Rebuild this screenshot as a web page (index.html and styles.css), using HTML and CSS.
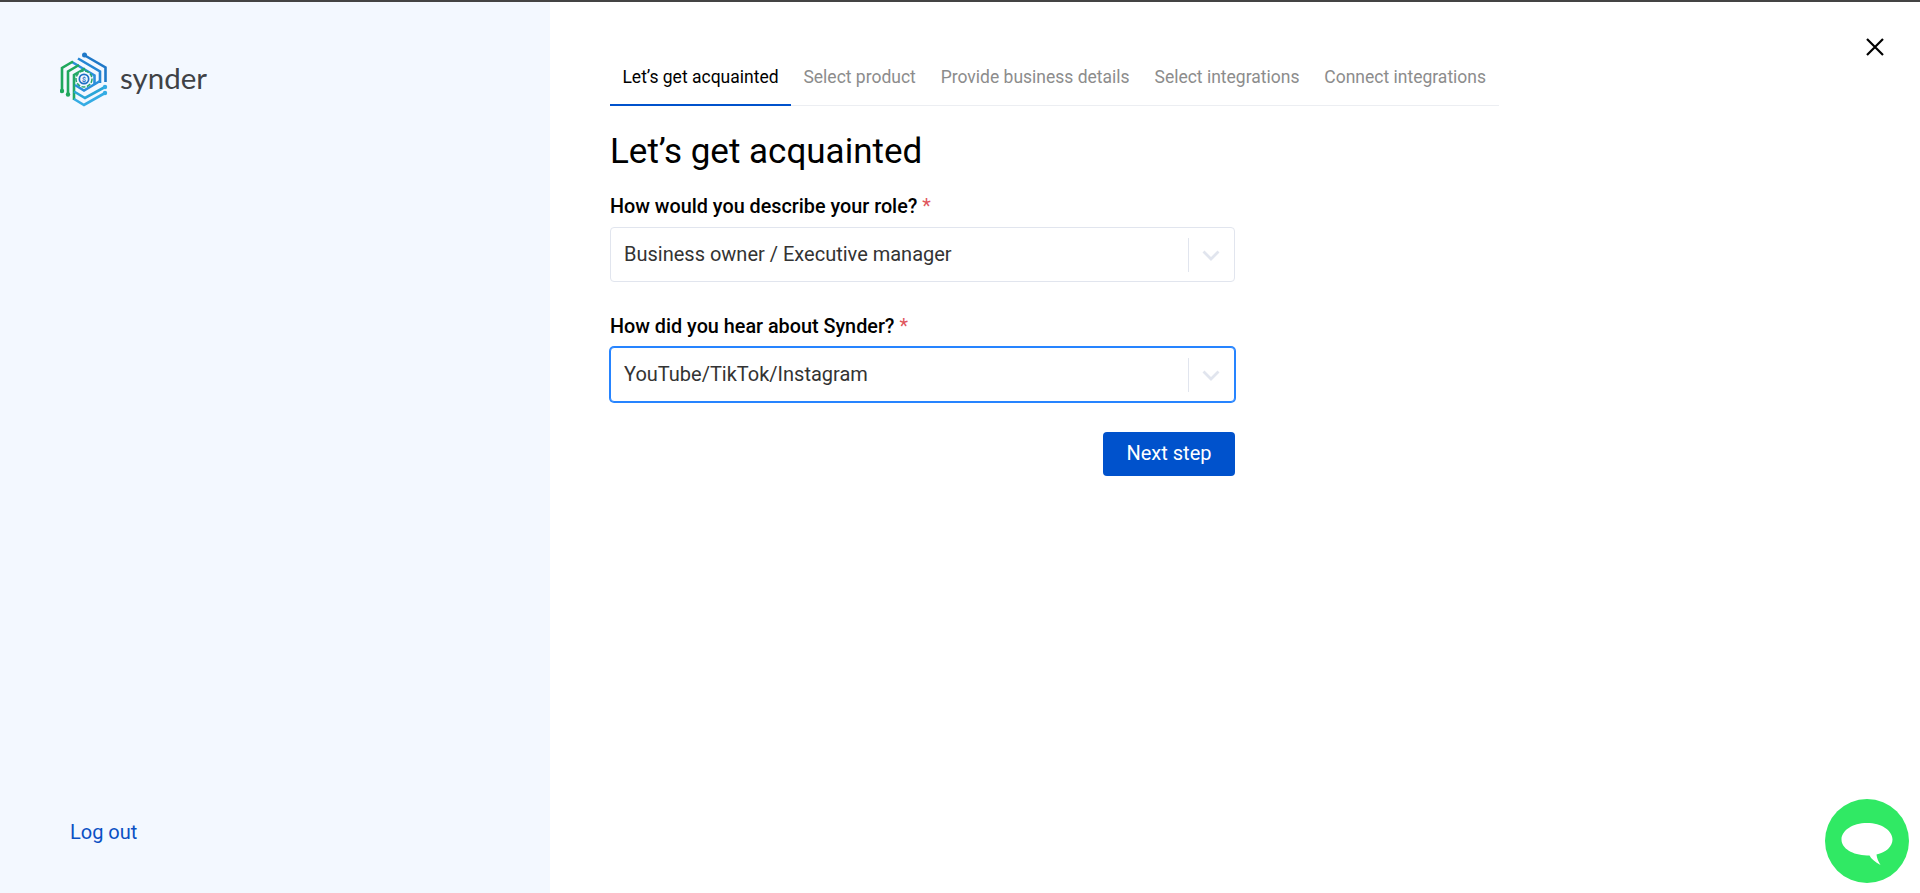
FILE: index.html
```html
<!DOCTYPE html>
<html lang="en">
<head>
<meta charset="utf-8">
<title>Synder</title>
<link rel="stylesheet" href="styles.css">
</head>
<body>
<div class="app">
  <aside class="sidebar">
    <div class="brand">
      <svg class="logo" viewBox="60 52 48 56" width="48" height="56" fill="none" stroke-width="2.600">
        <path d="M84 55L105.500 67.500V82" stroke="#1f78c8"/>
        <path d="M78 58.500L100 71.500V83" stroke="#2485d4"/>
        <path d="M72 62L94.500 75.500V85" stroke="#2b8fdc"/>
        <path d="M73 61.500L62 68V91" stroke="#1fa85c"/>
        <path d="M79 65L68 71.500V94" stroke="#1fa85c"/>
        <path d="M85 68.500L74 75V100" stroke="#22a866"/>
        <path d="M100 81L84 90.500L75 85" stroke="#2b8fdc"/>
        <path d="M105 87L85 98L74 91.500" stroke="#2aa6d8"/>
        <path d="M105 93L84 105L74 99" stroke="#34ace4"/>
        <circle cx="84" cy="79" r="8" fill="#f3f8ff" stroke="#25a56b" stroke-width="1.500" stroke-dasharray="4 1.500"/>
        <circle cx="84" cy="79" r="5.500" fill="#1f6fc4" stroke="none"/>
        <circle cx="84" cy="79" r="3.800" fill="#f3f8ff" stroke="none"/>
        <text class="logo-coin" x="84" y="81.500" text-anchor="middle">$</text>
        <g stroke="none">
          <circle cx="84.500" cy="55" r="2.500" fill="#1f78c8"/>
          <circle cx="62" cy="91" r="2.200" fill="#1fa85c"/>
          <circle cx="68" cy="94.500" r="2.200" fill="#1fa85c"/>
          <circle cx="105" cy="87" r="2.200" fill="#34ace4"/>
          <circle cx="105" cy="93" r="2.200" fill="#34ace4"/>
        </g>
      </svg>
      <span class="brand-name">synder</span>
    </div>
    <a class="logout" href="#">Log out</a>
  </aside>
  <main class="main">
    <nav class="tabs">
      <a class="tab tab-active" href="#">Let’s get acquainted</a>
      <a class="tab" href="#">Select product</a>
      <a class="tab" href="#">Provide business details</a>
      <a class="tab" href="#">Select integrations</a>
      <a class="tab" href="#">Connect integrations</a>
    </nav>
    <h1 class="title">Let’s get acquainted</h1>
    <form class="form">
      <div class="field">
        <div class="label">How would you describe your role? <span class="req">*</span></div>
        <div class="select">
          <span class="value">Business owner / Executive manager</span>
          <span class="sep"></span>
          <svg class="chev" viewBox="0 0 20 20" width="20" height="20"><path d="M2.500 6.500L10 14L17.500 6.500" fill="none" stroke="#e1e5ee" stroke-width="2.800"/></svg>
        </div>
      </div>
      <div class="field">
        <div class="label">How did you hear about Synder? <span class="req">*</span></div>
        <div class="select select-focus">
          <span class="value">YouTube/TikTok/Instagram</span>
          <span class="sep"></span>
          <svg class="chev" viewBox="0 0 20 20" width="20" height="20"><path d="M2.500 6.500L10 14L17.500 6.500" fill="none" stroke="#e1e5ee" stroke-width="2.800"/></svg>
        </div>
      </div>
      <div class="actions"><button class="next" type="button">Next step</button></div>
    </form>
  </main>
</div>
<svg class="close" viewBox="0 0 18 18" width="18" height="18"><path d="M1 1L17 17M17 1L1 17" stroke="#000" stroke-width="2.200"/></svg>
<div class="chat">
  <svg viewBox="0 0 54 48" width="54" height="48"><path d="M27 3C12.500 3 1.500 10.500 1.500 19.500C1.500 28.500 12.500 35 27 35.500C28.500 35.500 29 35.500 29.500 35.400C31 38.500 35 42 40.500 45C38.500 42 36.800 38 36.500 34.500C46 32.500 52.500 26.500 52.500 19.500C52.500 10.500 41.500 3 27 3Z" fill="#fff"/></svg>
</div>
</body>
</html>
```
FILE: styles.css
```css
* { box-sizing: border-box; }
html, body { margin: 0; height: 100%; overflow: hidden; }
body {
  font-family: Roboto, "Liberation Sans", sans-serif;
  background: #fff;
  color: #000;
}
.app {
  display: flex;
  height: 100%;
  border-top: 2px solid #444;
}
.sidebar {
  flex: 0 0 550px;
  background: #f3f8ff;
  display: flex;
  flex-direction: column;
  justify-content: space-between;
  padding: 50px 0 49px 60px;
}
.brand { display: flex; align-items: center; gap: 12px; }
.logo { display: block; }
.logo-coin {
  font-family: Roboto, sans-serif;
  font-size: 7px;
  font-weight: 700;
  fill: #1f6fc4;
  stroke: none;
}
.brand-name {
  font-family: Lato, sans-serif;
  font-size: 29.500px;
  font-weight: 400;
  color: #3f4246;
  line-height: 40px;
  margin-top: -5px;
}
.logout {
  margin-left: 10px;
  font-size: 20px;
  line-height: 24px;
  color: #0a50c4;
  text-decoration: none;
}
.main { flex: 1; padding: 46px 0 0 60px; }
.tabs {
  display: flex;
  width: 889px;
  border-bottom: 1px solid #eceef2;
}
.tab {
  padding: 19px 12.450px 17px;
  font-size: 17.500px;
  line-height: 20px;
  color: #8c8c8c;
  text-decoration: none;
  white-space: nowrap;
  margin-bottom: -1px;
  border-bottom: 2px solid transparent;
}
.tab-active { color: #000; border-bottom-color: #0052cc; }
.title {
  margin: 24px 0 0;
  font-size: 35px;
  line-height: 44px;
  font-weight: 400;
  color: #000;
}
.form { width: 625px; margin-top: 19px; }
.field { margin-bottom: 31px; }
.field + .field { margin-bottom: 30px; }
.label {
  font-size: 19.800px;
  font-weight: 500;
  line-height: 28px;
  margin-bottom: 6px;
}
.req { color: #e0555c; font-weight: 400; }
.select {
  display: flex;
  align-items: center;
  height: 55px;
  border: 1px solid #e1e5ee;
  border-radius: 4px;
  padding: 0 13px 0 13px;
  background: #fff;
}
.select-focus {
  border-color: #2684ff;
  box-shadow: 0 0 0 1px #2684ff;
}
.value { flex: 1; font-size: 20px; line-height: 24px; padding-bottom: 2px; color: #333; }
.sep { width: 1px; height: 34px; background: #e1e5ee; margin-right: 12px; }
.chev { display: block; }
.actions { display: flex; justify-content: flex-end; }
.next {
  width: 132px;
  height: 44px;
  border: 0;
  border-radius: 4px;
  background: #0052cc;
  color: #fff;
  font-family: inherit;
  font-size: 20px;
  font-weight: 400;
  padding: 0 0 2px;
}
.close { position: absolute; left: 1866px; top: 38px; }
.chat {
  position: absolute;
  left: 1825px;
  top: 799px;
  width: 84px;
  height: 84px;
  border-radius: 50%;
  background: #30e964;
  display: flex;
  align-items: center;
  justify-content: center;
  padding-top: 6px;
}
```
